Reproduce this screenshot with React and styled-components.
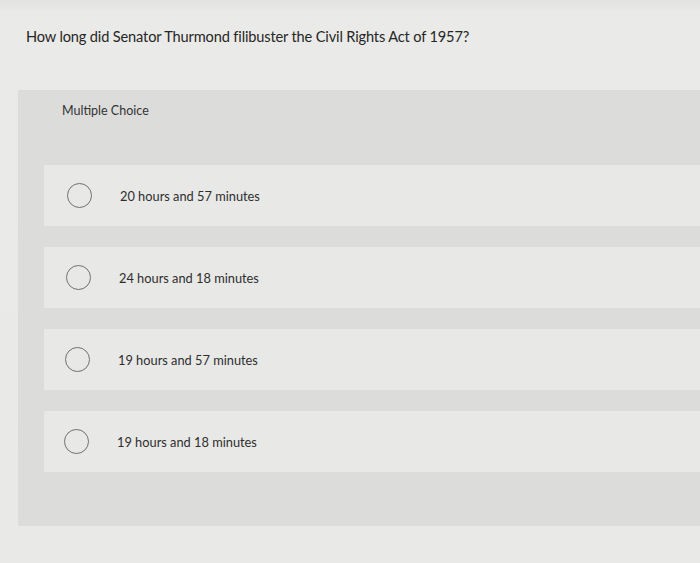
import React from 'react';
import styled, { createGlobalStyle } from 'styled-components';

const GlobalStyle = createGlobalStyle`
  html, body {
    margin: 0;
    padding: 0;
    background: #e8e8e6;
  }
  body {
    font-family: Lato, 'Noto Sans', sans-serif;
    color: #2e2e2e;
  }
`;

const Page = styled.div`
  width: 700px;
  height: 563px;
  overflow: hidden;
  background: linear-gradient(180deg, #e2e2e0 0px, #eaeae8 12px, #e9e9e7 100%);
`;

const Question = styled.h1`
  margin: 0;
  padding: 27px 0 0 26px;
  font-size: 14.6px;
  line-height: 20px;
  font-weight: 400;
  letter-spacing: -0.15px;
  color: #262626;
`;

const Panel = styled.section`
  margin: 43px 0 0 18px;
  padding: 13px 0 54px 0;
  background: #dcdcda;
`;

const PanelTitle = styled.div`
  padding-left: 44px;
  font-size: 12.5px;
  line-height: 16px;
  color: #333;
`;

const OptionList = styled.div`
  margin-top: 46px;
  padding-left: 26px;
  display: flex;
  flex-direction: column;
  gap: 21px;
`;

const Option = styled.label`
  display: flex;
  align-items: center;
  height: 61px;
  padding-left: ${p => p.$indent}px;
  background: #e8e8e6;
  cursor: pointer;
`;

const Radio = styled.span`
  width: 23px;
  height: 23px;
  border: 1.5px solid #707070;
  border-radius: 50%;
  flex-shrink: 0;
`;

const OptionText = styled.span`
  margin-left: 28px;
  font-size: 12.8px;
  color: #2e2e2e;
`;

const options = [
  { text: '20 hours and 57 minutes', indent: 23 },
  { text: '24 hours and 18 minutes', indent: 22 },
  { text: '19 hours and 57 minutes', indent: 21 },
  { text: '19 hours and 18 minutes', indent: 20 },
];

const App = () => (
  <Page>
    <GlobalStyle />
    <Question>
      How long did Senator Thurmond filibuster the Civil Rights Act of 1957?
    </Question>
    <Panel>
      <PanelTitle>Multiple Choice</PanelTitle>
      <OptionList>
        {options.map(o => (
          <Option key={o.text} $indent={o.indent}>
            <Radio />
            <OptionText>{o.text}</OptionText>
          </Option>
        ))}
      </OptionList>
    </Panel>
  </Page>
);

export default App;
